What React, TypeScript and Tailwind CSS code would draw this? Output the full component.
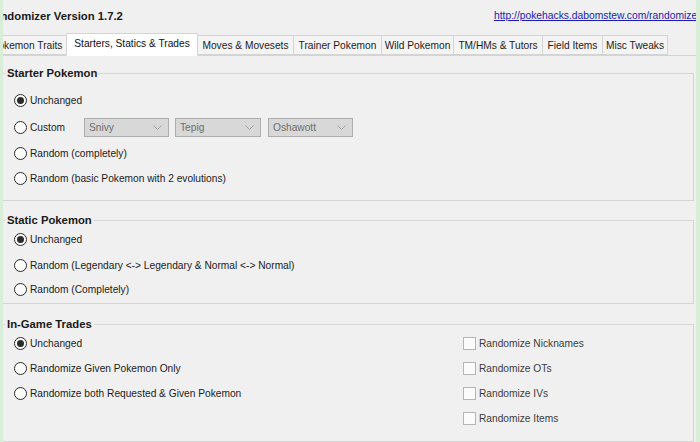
import React from "react";

const F = "font-['Liberation_Sans',Arial,sans-serif]";

function Radio({ checked }: { checked?: boolean }) {
  return (
    <span className="w-[13px] h-[13px] rounded-full border border-[#2b2b2b] bg-white flex items-center justify-center shrink-0">
      {checked && <span className="w-[7px] h-[7px] rounded-full bg-[#2b2b2b]" />}
    </span>
  );
}

function RadioLabel({ label, checked }: { label: string; checked?: boolean }) {
  return (
    <div className="flex items-center gap-[3px]">
      <Radio checked={checked} />
      <span className="text-[10.2px] text-[#1c1c1c] whitespace-nowrap">{label}</span>
    </div>
  );
}

function Combo({ value, w }: { value: string; w: string }) {
  return (
    <div className={`${w} h-[19px] border border-[#adadad] bg-[#d8d8d8] flex items-center justify-between pl-[4px] pr-[6px]`}>
      <span className="text-[10.2px] text-[#6e6e6e]">{value}</span>
      <svg width="9" height="5" viewBox="0 0 9 5">
        <polyline points="0.5,0.5 4.5,4.5 8.5,0.5" fill="none" stroke="#a0a0a0" strokeWidth="1" />
      </svg>
    </div>
  );
}

function Check({ label }: { label: string }) {
  return (
    <div className="h-[25px] flex items-center gap-[3px]">
      <span className="w-[13px] h-[13px] border border-[#b5b5b5] bg-[#fbfbfb] shrink-0" />
      <span className="text-[10.2px] text-[#3c3c3c] whitespace-nowrap">{label}</span>
    </div>
  );
}

function GroupTitle({ title }: { title: string }) {
  return (
    <div className="-mt-[8px] h-[14px] ml-[4px] w-fit px-[2px] bg-[#f0f0f0] text-[11.3px] leading-[14px] font-bold text-[#1a1a1a] whitespace-nowrap">
      {title}
    </div>
  );
}

const tabs = [
  { label: "Pokemon Traits", w: "w-[80px]", ml: "-ml-[16px]" },
  { label: "Starters, Statics & Trades", w: "w-[132px]", sel: true },
  { label: "Moves & Movesets", w: "w-[97px]" },
  { label: "Trainer Pokemon", w: "w-[89px]" },
  { label: "Wild Pokemon", w: "w-[73px]" },
  { label: "TM/HMs & Tutors", w: "w-[90px]" },
  { label: "Field Items", w: "w-[61px]" },
  { label: "Misc Tweaks", w: "w-[66px]" },
];

export default function App() {
  return (
    <div className={`${F} w-[700px] h-[442px] bg-[#f0f0f0] flex overflow-hidden`}>
      <div className="w-[3px] bg-[#d9eed9] shrink-0" />
      <div className="flex-1 flex flex-col overflow-hidden">
        {/* title bar */}
        <div className="h-[33px] shrink-0 flex items-start pt-[9px]">
          <div className="-ml-[17px] text-[11.3px] font-bold text-[#1a1a1a] leading-[14px] whitespace-nowrap">
            Randomizer Version 1.7.2
          </div>
          <div className="ml-auto text-[10.3px] leading-[14px] text-[#1a1ab8] underline whitespace-nowrap w-[202px] shrink-0">
            http://pokehacks.dabomstew.com/randomizer
          </div>
        </div>
        {/* tab strip */}
        <div className="h-[23px] shrink-0 flex items-end relative z-10">
          {tabs.map((t, i) => (
            <div
              key={i}
              className={`${t.w} ${t.ml ?? ""} shrink-0 flex items-center justify-center text-[10.2px] whitespace-nowrap border border-[#d4d4d4] ${
                t.sel
                  ? "h-[23px] bg-white border-b-white -ml-[1px] text-[#111] pb-[2px]"
                  : "h-[20px] bg-[#f4f4f4] text-[#1c1c1c] -ml-[1px] mb-[1px] pt-[1px]"
              }`}
            >
              {t.label}
            </div>
          ))}
        </div>
        {/* panel */}
        <div className="flex-1 -mt-[1px] border-t border-[#d4d4d4] flex flex-col pt-[17px] pr-[2px]">
          {/* Starter Pokemon */}
          <div className="-ml-[3px] h-[128px] border border-[#d5d5d5] shrink-0 flex flex-col">
            <GroupTitle title="Starter Pokemon" />
            <div className="pl-[13px] pt-[7px] flex flex-col">
              <div className="h-[27px] flex items-center">
                <RadioLabel label="Unchanged" checked />
              </div>
              <div className="h-[27px] flex items-center">
                <div className="w-[70px]">
                  <RadioLabel label="Custom" />
                </div>
                <div className="flex gap-[6px]">
                  <Combo value="Snivy" w="w-[85px]" />
                  <Combo value="Tepig" w="w-[86px]" />
                  <div className="ml-[1px]">
                    <Combo value="Oshawott" w="w-[85px]" />
                  </div>
                </div>
              </div>
              <div className="h-[25px] flex items-center">
                <RadioLabel label="Random (completely)" />
              </div>
              <div className="h-[25px] flex items-center">
                <RadioLabel label="Random (basic Pokemon with 2 evolutions)" />
              </div>
            </div>
          </div>
          {/* Static Pokemon */}
          <div className="-ml-[3px] mt-[19px] h-[84px] border border-[#d5d5d5] shrink-0 flex flex-col">
            <GroupTitle title="Static Pokemon" />
            <div className="pl-[13px] flex flex-col">
              <div className="h-[26px] flex items-center">
                <RadioLabel label="Unchanged" checked />
              </div>
              <div className="h-[25px] flex items-center">
                <RadioLabel label="Random (Legendary <-> Legendary & Normal <-> Normal)" />
              </div>
              <div className="h-[24px] flex items-center">
                <RadioLabel label="Random (Completely)" />
              </div>
            </div>
          </div>
          {/* In-Game Trades */}
          <div className="-ml-[3px] mt-[20px] flex-1 border border-[#d5d5d5] flex flex-col">
            <GroupTitle title="In-Game Trades" />
            <div className="pl-[13px] flex">
              <div className="w-[449px] flex flex-col">
                <div className="h-[25px] flex items-center">
                  <RadioLabel label="Unchanged" checked />
                </div>
                <div className="h-[25px] flex items-center">
                  <RadioLabel label="Randomize Given Pokemon Only" />
                </div>
                <div className="h-[25px] flex items-center">
                  <RadioLabel label="Randomize both Requested & Given Pokemon" />
                </div>
              </div>
              <div className="flex flex-col">
                <Check label="Randomize Nicknames" />
                <Check label="Randomize OTs" />
                <Check label="Randomize IVs" />
                <Check label="Randomize Items" />
              </div>
            </div>
          </div>
        </div>
      </div>
      <div className="w-[4px] bg-[#d9eed9] shrink-0" />
    </div>
  );
}
